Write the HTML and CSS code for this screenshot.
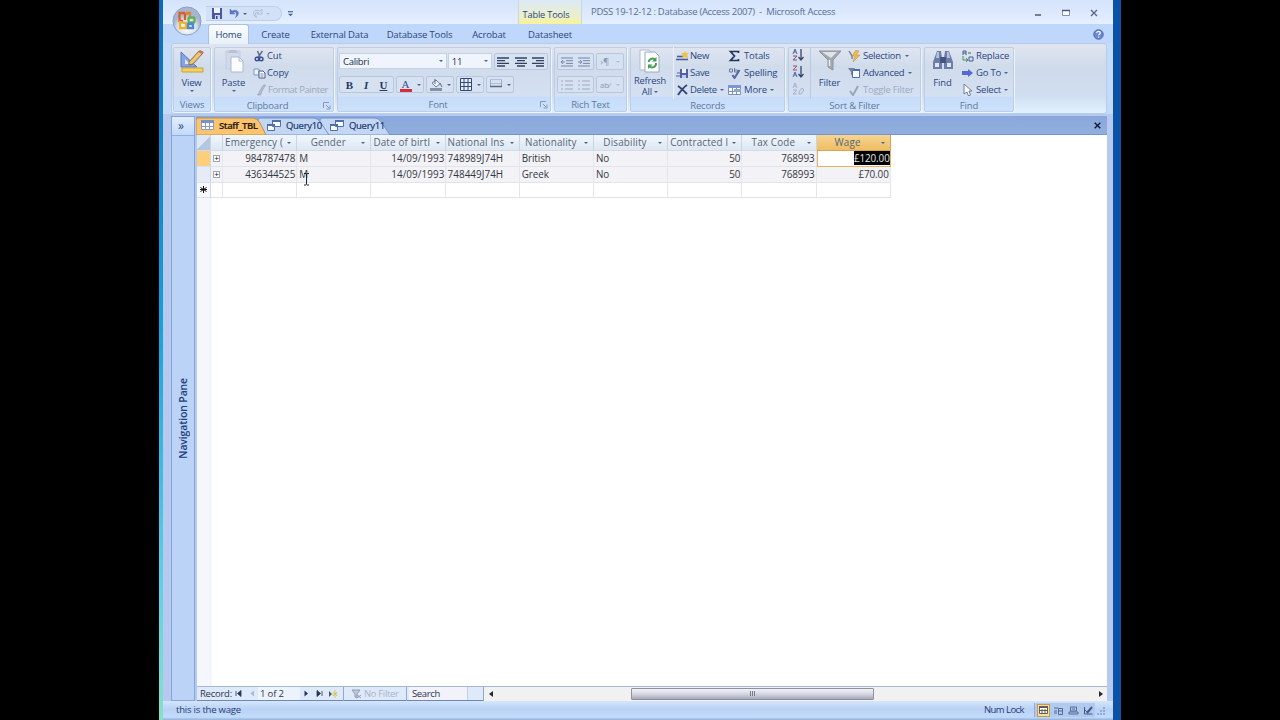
FILE: index.html
```html
<!DOCTYPE html>
<html lang="en">
<head>
    <meta charset="UTF-8">
    <title>PDSS 19-12-12 : Database (Access 2007) - Microsoft Access</title>
    <link rel="stylesheet" href="styles.css">
</head>
<body>
    <div class="desktop">
        <div class="window">
            <div class="office-button">
                <svg width="30" height="30" viewBox="0 0 30 30">
                    <defs><radialGradient id="orb" cx="50%" cy="75%"><stop offset="0" stop-color="#fffdf5"/><stop offset=".65" stop-color="#dde2ee"/><stop offset="1" stop-color="#a7b5d0"/></radialGradient></defs>
                    <circle cx="15" cy="15" r="14" fill="url(#orb)" stroke="#8d9fc4"/>
                    <g fill="none" stroke-width="2.3">
                        <path d="M13 7H7.500v8H11M13 7v7" stroke="#dc5d2c"/>
                        <path d="M15 9v-2h3v4" stroke="#d9892d"/>
                        <rect x="16.5" y="11.500" width="6" height="5" rx="1" stroke="#5fae58"/>
                        <path d="M8 16v6h6v-5z" stroke="#e9b52e"/>
                        <path d="M16 18h5v4h-5z" stroke="#4f88cf"/>
                    </g>
                </svg>
            </div>
            <div class="title-bar">
                <div class="quick-access">
                    <svg width="12" height="11" viewBox="0 0 12 11"><path fill="#4b57a6" d="M1 0h10v11H1z"/><path fill="#eef3ff" d="M3 0h6v5H3z"/><path fill="#cfd8f2" d="M4 7h5v4H4z"/><path fill="#39458e" d="M5 8h1.500v3H5z"/></svg>
                    <svg width="11" height="11" viewBox="0 0 11 11"><path d="M1 1v5h5L4.300 4.500C7 3 8.500 5 6.500 9.500 12 6 9 0 3 3z" fill="#5877c4" stroke="#5877c4" stroke-width=".5"/></svg>
                    <i class="caret"></i>
                    <svg class="redo" width="11" height="11" viewBox="0 0 11 11"><path d="M10 1v5H5l1.700-1.500C4 3 2.500 5 4.500 9.500-1 6 2 0 8 3z" fill="#d5dff1" stroke="#9fafd0" stroke-width=".7"/></svg>
                    <i class="caret pale"></i>
                </div>
                <svg class="customize" width="7" height="6" viewBox="0 0 7 6"><path d="M1 .700h5" stroke="#4d628f" stroke-width="1.200"/><path d="M1 2.700h5L3.500 5.300z" fill="#4d628f"/></svg>
                <div class="context-title">Table Tools</div>
                <div class="window-title">PDSS 19-12-12 : Database (Access 2007) &nbsp;-&nbsp; Microsoft Access</div>
                <div class="window-buttons">
                    <svg width="8" height="8" viewBox="0 0 8 8"><path d="M1 6h6" stroke="#49587e" stroke-width="1.500"/></svg>
                    <svg width="8" height="8" viewBox="0 0 8 8"><path d="M.5 1.500h7v5h-7z" fill="#fff" stroke="#8190b0"/><path d="M0 1.500h8" stroke="#49587e" stroke-width="1.500"/></svg>
                    <svg width="8" height="8" viewBox="0 0 8 8"><path d="M1 1l6 6M7 1L1 7" stroke="#59688c" stroke-width="1.400"/></svg>
                </div>
            </div>
            <div class="ribbon-tabs">
                <span class="tab active t-home">Home</span>
                <span class="tab t-create">Create</span>
                <span class="tab t-external">External Data</span>
                <span class="tab t-database">Database Tools</span>
                <span class="tab t-acrobat">Acrobat</span>
                <span class="tab t-datasheet">Datasheet</span>
                <svg class="help" width="11" height="11" viewBox="0 0 11 11"><circle cx="5.500" cy="5.500" r="4.700" fill="#6b89d4" stroke="#4164b8"/><path d="M3.800 4c0-2.300 3.500-2 3.500 0 0 1.200-1.700 1.200-1.700 2.300M5.600 7.600v1.200" fill="none" stroke="#fff" stroke-width="1.200"/></svg>
            </div>

            <div class="ribbon">
                <div class="group g-views">
                    <div class="group-body">
                        <div class="big-button">
                            <svg width="26" height="26" viewBox="0 0 26 26"><path d="M2 4v15h16z" fill="#86a4e2" stroke="#5678c4"/><path d="M6 11v5h5z" fill="#dce8fc"/><path d="M10 14L20 3l4 2-10 11-4 1z" fill="#efc66d" stroke="#846d50"/><path d="M19 4l2-2 4 2-2 2z" fill="#bd7560"/><path d="M3 20h21v4H3z" fill="#f4d25d" stroke="#c7a23b"/></svg>
                            <span>View</span><i class="caret"></i>
                        </div>
                    </div>
                    <div class="group-name">Views</div>
                </div>
                <div class="group g-clipboard">
                    <div class="group-body">
                        <div class="big-button">
                            <svg width="24" height="26" viewBox="0 0 24 26"><path d="M4 3h14v18H4z" fill="#d0daea" stroke="#c1cce0"/><path d="M8 2h6l2 3H6z" fill="#b6c1d4"/><path d="M9 9h8l4 4v11H9z" fill="#fbfdff" stroke="#aab9d4"/><path d="M17 9v4h4" fill="none" stroke="#aab9d4"/></svg>
                            <span>Paste</span><i class="caret"></i>
                        </div>
                        <div class="stack">
                            <div class="row"><svg width="12" height="12" viewBox="0 0 12 12"><path d="M4 1l3 7M9 1L4 8" stroke="#596990" stroke-width="1.400"/><circle cx="3.500" cy="9" r="1.800" fill="none" stroke="#364c92" stroke-width="1.400"/><circle cx="7.700" cy="9" r="1.800" fill="none" stroke="#364c92" stroke-width="1.400"/></svg>Cut</div>
                            <div class="row"><svg width="13" height="12" viewBox="0 0 13 12"><path d="M1 2h5v6H1z" fill="#eaf1ff" stroke="#8496b9"/><path d="M6 4h4l2 2v5H6z" fill="#fff" stroke="#46588c"/><path d="M7.500 7h3M7.500 9h3" stroke="#6b82b9"/></svg>Copy</div>
                            <div class="row off painter"><svg width="12" height="12" viewBox="0 0 12 12"><path d="M10 1L7 6l-2 5H2l3-5 3-5z" fill="#b8c1d2" stroke="#929db4" stroke-width=".7"/></svg>Format Painter</div>
                        </div>
                    </div>
                    <div class="group-name">Clipboard<svg class="launcher" width="8" height="8" viewBox="0 0 8 8"><path d="M.5 6V.500H6M3 3l3 3M7 3.500V7H3.500" fill="none" stroke="#8398bd"/></svg></div>
                </div>
                <div class="group g-font">
                    <div class="group-body font-body">
                        <div class="line">
                            <div class="combo face">Calibri<i class="caret"></i></div>
                            <div class="combo size">11<i class="caret"></i></div>
                            <div class="button-set align">
                                <svg width="12" height="10" viewBox="0 0 12 10"><path d="M0 1h12M0 3.700h8M0 6.400h12M0 9h8" stroke="#33415f" stroke-width="1.300"/></svg>
                                <svg width="12" height="10" viewBox="0 0 12 10"><path d="M0 1h12M2 3.700h8M0 6.400h12M2 9h8" stroke="#33415f" stroke-width="1.300"/></svg>
                                <svg width="12" height="10" viewBox="0 0 12 10"><path d="M0 1h12M4 3.700h8M0 6.400h12M4 9h8" stroke="#33415f" stroke-width="1.300"/></svg>
                            </div>
                        </div>
                        <div class="line">
                            <div class="button-set biu"><b>B</b><em>I</em><u>U</u></div>
                            <div class="button-set pick"><span class="font-color">A</span><i class="caret"></i></div>
                            <div class="button-set pick"><svg width="14" height="13" viewBox="0 0 14 13"><path d="M3 5l4-3 4 4-4 3z" fill="#edf2fa" stroke="#707e99"/><path d="M6 1v5M11 5l2 4" stroke="#5a6b8f"/><path d="M1 10h12v3H1z" fill="#8292ac"/></svg><i class="caret"></i></div>
                            <div class="button-set pick"><svg width="14" height="13" viewBox="0 0 14 13"><path d="M1.500.500h11v12h-11zM5 .500v12M9 .500v12M1.500 4.500h11M1.500 8.500h11" fill="#e8effb" stroke="#344978"/></svg><i class="caret"></i></div>
                            <div class="button-set pick last"><svg width="14" height="13" viewBox="0 0 14 13"><path d="M1.500 2v7M12.500 2v7" stroke="#9aabcb"/><path d="M1 1.500h12M2 5.500h10" stroke="#b1bfd8"/><path d="M1 8.500h12" stroke="#596a8d" stroke-width="1.500"/></svg><i class="caret"></i></div>
                        </div>
                    </div>
                    <div class="group-name">Font<svg class="launcher" width="8" height="8" viewBox="0 0 8 8"><path d="M.5 6V.500H6M3 3l3 3M7 3.500V7H3.500" fill="none" stroke="#8398bd"/></svg></div>
                </div>
                <div class="group g-rich">
                    <div class="group-body font-body">
                        <div class="line">
                            <div class="button-set rich-pair">
                                <svg width="12" height="10" viewBox="0 0 12 10"><path d="M0 1h12M5 3.700h7M5 6.400h7M0 9h12M4 5H0M2 3L0 5l2 2" fill="none" stroke="#7586a8"/></svg>
                                <svg width="12" height="10" viewBox="0 0 12 10"><path d="M0 1h12M5 3.700h7M5 6.400h7M0 9h12M0 5h4M2 3l2 2-2 2" fill="none" stroke="#7586a8"/></svg>
                            </div>
                            <div class="button-set rich-one">›¶<i class="caret pale"></i></div>
                        </div>
                        <div class="line">
                            <div class="button-set rich-pair">
                                <svg width="12" height="10" viewBox="0 0 12 10"><path d="M1 0v2M1 4v2M1 8v2M4 1h8M4 5h8M4 9h8" stroke="#9caac2"/></svg>
                                <svg width="12" height="10" viewBox="0 0 12 10"><path d="M0 1h2M0 5h2M0 9h2M4 1h8M4 5h8M4 9h8" stroke="#9caac2"/></svg>
                            </div>
                            <div class="button-set rich-one"><span class="ab">ab⁄</span><i class="caret pale"></i></div>
                        </div>
                    </div>
                    <div class="group-name">Rich Text</div>
                </div>
                <div class="group g-records">
                    <div class="group-body">
                        <div class="big-button refresh">
                            <svg width="24" height="26" viewBox="0 0 24 26"><path d="M2 2h9l3 3v17H2z" fill="#fafcff" stroke="#b2bdce"/><path d="M7 4h10l4 4v16H7z" fill="#fff" stroke="#9ba9c2"/><path d="M10.500 14a4 4 0 0 1 7-2M18 15a4 4 0 0 1-7 3" fill="none" stroke="#469b55" stroke-width="1.900"/><path d="M18.500 9v4.500h-4.500zM10 21v-4.500h4.500z" fill="#469b55"/></svg>
                            <div class="two-lines">Refresh<br>All <i class="caret"></i></div>
                        </div>
                        <div class="stack r-one">
                            <div class="row"><svg width="13" height="12" viewBox="0 0 13 12"><path d="M1 5h11v5H1z" fill="#c9d9f4"/><path d="M0 9.500h12M1 6.500h6" stroke="#495d91" stroke-width="1.300"/><path d="M9 1l1 2 3 0-2 2 1 3-3-1-3 1 1-3-2-2h3z" fill="#f0c33b"/></svg>New</div>
                            <div class="row"><svg width="13" height="12" viewBox="0 0 13 12"><path d="M0 9h8M1 6h5" stroke="#526498"/><path d="M4 2h8v9H4z" fill="#515eab"/><path d="M6 2h4v4H6z" fill="#f0f3ff"/><path d="M6 8h4v3H6z" fill="#c3cced"/></svg>Save</div>
                            <div class="row"><svg width="13" height="12" viewBox="0 0 13 12"><path d="M2 2c3 2 6 5 9 8M11 1C8 3 4 8 2 11" fill="none" stroke="#354777" stroke-width="1.900"/></svg>Delete<i class="caret"></i></div>
                        </div>
                        <div class="stack r-two">
                            <div class="row"><svg width="12" height="12" viewBox="0 0 12 12"><path d="M10 3V1.500H2L6 6l-4 4.500h8V9" fill="none" stroke="#22345e" stroke-width="1.700"/></svg>Totals</div>
                            <div class="row"><svg width="12" height="12" viewBox="0 0 12 12"><path d="M1 2h3v3H1zM6 1v4h3V3H6" fill="none" stroke="#6a7ba0"/><path d="M4 8l2 3 5-8" fill="none" stroke="#526a9b" stroke-width="2"/></svg>Spelling</div>
                            <div class="row"><svg width="13" height="12" viewBox="0 0 13 12"><path d="M.500 1.500h12v9H.500zM.500 7.500h12M4.500 4v7M8.500 4v7" fill="#fff" stroke="#7890bb"/><path d="M0 1h13v3H0z" fill="#7b98cd"/><path d="M6 5h7v3H6z" fill="#90a5cd"/></svg>More<i class="caret"></i></div>
                        </div>
                    </div>
                    <div class="group-name">Records</div>
                </div>
                <div class="group g-sort">
                    <div class="group-body">
                        <div class="sort-icons">
                            <svg width="14" height="14" viewBox="0 0 14 14"><path d="M2 6l2-5 2 5M3 4h2" fill="none" stroke="#4f67a5"/><path d="M2 8h4l-4 4h4" fill="none" stroke="#7c5163"/><path d="M10 1v10M7.500 9l2.500 3 2.500-3" fill="none" stroke="#34466f" stroke-width="1.300"/></svg>
                            <svg width="14" height="14" viewBox="0 0 14 14"><path d="M2 1h4L2 5h4" fill="none" stroke="#a25171"/><path d="M2 12l2-5 2 5M3 10h2" fill="none" stroke="#4f67a5"/><path d="M10 1v10M7.500 9l2.500 3 2.500-3" fill="none" stroke="#34466f" stroke-width="1.300"/></svg>
                            <svg width="14" height="14" viewBox="0 0 14 14"><path d="M2 6l2-5 2 5M3 4h2M2 8h4l-4 4h4M8 10l3-4 2 2-3 4H8z" fill="none" stroke="#a3b0c7"/></svg>
                        </div>
                        <div class="big-button filter">
                            <svg width="26" height="26" viewBox="0 0 26 26"><path d="M2 3h22l-8 9v10l-5-3v-7z" fill="#a3a7b0" stroke="#8d939f"/><path d="M5 4h15l-6 6z" fill="#e0e3e8"/><path d="M12.500 12v6" stroke="#eceff3" stroke-width="1.500"/></svg>
                            <span>Filter</span>
                        </div>
                        <div class="stack s-one">
                            <div class="row"><svg width="13" height="12" viewBox="0 0 13 12"><path d="M1 1l3 5v3" fill="none" stroke="#6d7ca0" stroke-width="1.400"/><path d="M8 0L4 6h3l-2 6 7-7H8l3-4z" fill="#efbd44" stroke="#b68c3c" stroke-width=".5"/></svg>Selection<i class="caret"></i></div>
                            <div class="row"><svg width="13" height="12" viewBox="0 0 13 12"><path d="M4.500 3.500h7v7h-7z" fill="#fff" stroke="#476db0"/><path d="M4 3h8" stroke="#476db0" stroke-width="2"/><path d="M0 1h7L4 5v4L3 7V5z" fill="#75819a"/></svg>Advanced<i class="caret"></i></div>
                            <div class="row off"><svg width="13" height="12" viewBox="0 0 13 12"><path d="M2 7l3 4 5-9" fill="none" stroke="#98a6bd" stroke-width="2"/></svg>Toggle Filter</div>
                        </div>
                    </div>
                    <div class="group-name">Sort &amp; Filter</div>
                </div>
                <div class="group g-find">
                    <div class="group-body">
                        <div class="big-button">
                            <svg width="24" height="26" viewBox="0 0 24 26"><path d="M6 3h4l1 7v11H2v-7zM14 3h4l4 11v7h-9V10z" fill="#6b7da8"/><path d="M9 9h6v6H9z" fill="#42547f"/><path d="M4 15h4v4H4zM16 15h4v4h-4z" fill="#dfe6f3"/><path d="M6 4h2v6H5zM16 4h2l1 6h-3z" fill="#b4c1dc"/></svg>
                            <span>Find</span>
                        </div>
                        <div class="stack f-one">
                            <div class="row"><svg width="13" height="12" viewBox="0 0 13 12"><path d="M2 5V1h3v4M2 3h3M7 3h3" fill="none" stroke="#465b88"/><path d="M2 6v4h4M5 8l2 2-2 2" fill="none" stroke="#4b8c5d"/><path d="M8 7h4v4H8z" fill="none" stroke="#465b88"/></svg>Replace</div>
                            <div class="row"><svg width="13" height="12" viewBox="0 0 13 12"><path d="M1 4h6V2l5 4-5 4V8H1z" fill="#5467d4"/></svg>Go To<i class="caret"></i></div>
                            <div class="row"><svg width="13" height="12" viewBox="0 0 13 12"><path d="M3 0v10l3-2 1.500 4 2-1L8 7h3z" fill="#fff" stroke="#61718f" stroke-width=".9"/></svg>Select<i class="caret"></i></div>
                        </div>
                    </div>
                    <div class="group-name">Find</div>
                </div>
            </div>

            <div class="workspace">
                <div class="nav-pane">
                    <div class="nav-toggle">»</div>
                    <div class="nav-body"><span class="nav-label">Navigation Pane</span></div>
                </div>
                <div class="document">
                    <div class="doc-tabs">
                        <svg class="tab-shapes" width="200" height="18" viewBox="0 0 200 18">
                            <path d="M124 18V3q0-2 2-2h53q4 0 7 5l8 12z" fill="#c3d7f5" stroke="#7591c6"/>
                            <path d="M62 18V3q0-2 2-2h54q4 0 7 5l8 12z" fill="#c3d7f5" stroke="#7591c6"/>
                            <path d="M0 18V3q0-2 2-2h55q4 0 7 5l6 12z" fill="#fdc46f" stroke="#b98f52"/>
                        </svg>
                        <div class="doc-tab current"><svg width="14" height="11" viewBox="0 0 14 11"><path d="M.500.500h12v9H.500zM.500 6.500h12M4.500 3v7M8.500 3v7" fill="#fff" stroke="#889bc0"/><path d="M0 0h13v3H0z" fill="#7892ca"/></svg><span>Staff_TBL</span></div>
                        <div class="doc-tab q10"><svg width="14" height="11" viewBox="0 0 14 11"><path d="M5.500.500h8v6h-8zM.500 4.500h7v6h-7z" fill="#f8fbff" stroke="#526fa6"/><path d="M5 1h9M0 5h8" stroke="#526fa6" stroke-width="2"/></svg><span>Query10</span></div>
                        <div class="doc-tab q11"><svg width="14" height="11" viewBox="0 0 14 11"><path d="M5.500.500h8v6h-8zM.500 4.500h7v6h-7z" fill="#f8fbff" stroke="#526fa6"/><path d="M5 1h9M0 5h8" stroke="#526fa6" stroke-width="2"/></svg><span>Query11</span></div>
                        <svg class="doc-close" width="7" height="7" viewBox="0 0 7 7"><path d="M.700.700l5.600 5.600M6.300.700L.700 6.300" stroke="#0c1938" stroke-width="1.400"/></svg>
                    </div>
                    <div class="sheet">
                        <div class="grid">
                            <div class="head corner"></div><div class="head"></div>
                            <div class="head"><span class="long">Emergency (</span><i class="caret"></i></div>
                            <div class="head"><span>Gender</span><i class="caret"></i></div>
                            <div class="head"><span class="long">Date of birtl</span><i class="caret"></i></div>
                            <div class="head"><span class="long">National Ins</span><i class="caret"></i></div>
                            <div class="head"><span>Nationality</span><i class="caret"></i></div>
                            <div class="head"><span>Disability</span><i class="caret"></i></div>
                            <div class="head"><span class="long">Contracted l</span><i class="caret"></i></div>
                            <div class="head"><span>Tax Code</span><i class="caret"></i></div>
                            <div class="head picked"><span>Wage</span><i class="caret"></i></div>

                            <div class="selector picked"></div><div class="cell expand"><i>+</i></div>
                            <div class="cell num">984787478</div><div class="cell">M</div><div class="cell num date">14/09/1993</div><div class="cell code">748989J74H</div><div class="cell">British</div><div class="cell">No</div><div class="cell num">50</div><div class="cell num">768993</div><div class="cell num editing"><mark>£120.00</mark></div>

                            <div class="selector"></div><div class="cell expand"><i>+</i></div>
                            <div class="cell num">436344525</div><div class="cell">M</div><div class="cell num date">14/09/1993</div><div class="cell code">748449J74H</div><div class="cell">Greek</div><div class="cell">No</div><div class="cell num">50</div><div class="cell num">768993</div><div class="cell num">£70.00</div>

                            <div class="selector new-row"><svg width="9" height="9" viewBox="0 0 9 9"><path d="M4.500 1v7M1.500 2.500l6 4M7.500 2.500l-6 4M1 4.500h7" stroke="#111"/></svg></div>
                            <div class="cell blank"></div><div class="cell blank"></div><div class="cell blank"></div><div class="cell blank"></div><div class="cell blank"></div><div class="cell blank"></div><div class="cell blank"></div><div class="cell blank"></div><div class="cell blank"></div><div class="cell blank"></div>
                        </div>
                        <svg class="text-cursor" width="7" height="13" viewBox="0 0 7 13"><path d="M1 .500h2l.500.500.500-.500h2M3.500 1v10M1 12h2l.500-.500.500.500h2" fill="none" stroke="#222"/></svg>
                    </div>
                    <div class="record-bar">
                        <span class="record-label">Record:</span>
                        <svg class="first" width="7" height="7" viewBox="0 0 7 7"><path d="M1 1v5M6 .500v6L2.500 3.500z" fill="#263858" stroke="#263858" stroke-width=".8"/></svg>
                        <svg class="prev" width="6" height="7" viewBox="0 0 6 7"><path d="M4 .500v6l-3.500-3z" fill="#a9b8ce"/></svg>
                        <span class="record-pos">1 of 2</span>
                        <svg class="next" width="6" height="7" viewBox="0 0 6 7"><path d="M1.500.500v6l3.500-3z" fill="#263858"/></svg>
                        <svg class="last-rec" width="7" height="7" viewBox="0 0 7 7"><path d="M6 1v5M1 .500v6l3.500-3z" fill="#263858" stroke="#263858" stroke-width=".8"/></svg>
                        <svg class="new-rec" width="10" height="8" viewBox="0 0 10 8"><path d="M1 1v6l3-3z" fill="#46587b"/><path d="M7 0v8M4.500 4h5M5 2l4 4M9 2L5 6" stroke="#dcc75c"/></svg>
                        <div class="no-filter"><svg width="11" height="10" viewBox="0 0 11 10"><path d="M1 1h8L6 5v4L4 8V5z" fill="#c1cad8" stroke="#8f9db4"/><path d="M6 6l4 3M10 6L6 9" stroke="#8f9db4"/></svg><span>No Filter</span></div>
                        <span class="search">Search</span>
                        <div class="scroll">
                            <i class="arrow left"></i>
                            <div class="track"><div class="thumb"><i></i><i></i><i></i></div></div>
                            <i class="arrow right"></i>
                        </div>
                    </div>
                </div>
            </div>
            <div class="status-bar">
                <span>this is the wage</span>
                <span class="num-lock">Num Lock</span>
                <div class="view-buttons">
                    <svg class="on" width="13" height="13" viewBox="0 0 13 13"><path d="M2.500 3.500h8v6h-8zM5 5v5M8 5v5M3 6.500h7" fill="#fff" stroke="#635b55"/><path d="M2 3h9" stroke="#635b55" stroke-width="2"/></svg>
                    <svg width="13" height="13" viewBox="0 0 13 13"><path d="M2 4h4M2 7h3M2 9h3M6.500 4.500h4v6h-4zM7 7h3" fill="none" stroke="#526a96"/></svg>
                    <svg width="13" height="13" viewBox="0 0 13 13"><path d="M3.500 3h6v4h-6zM2 8h9v2H2zM5 5h3" fill="none" stroke="#526a96"/></svg>
                    <svg width="13" height="13" viewBox="0 0 13 13"><path d="M2.500 3v7h8M3 6l2 2" fill="none" stroke="#415888"/><path d="M5 9l5-6" stroke="#415888" stroke-width="2"/></svg>
                </div>
                <svg class="grip" width="10" height="10" viewBox="0 0 10 10"><path d="M7 2h2M4 5h2M7 5h2M1 8h2M4 8h2M7 8h2" stroke="#809cc8" stroke-width="1.500"/></svg>
            </div>
        </div>
    </div>
</body>
</html>
```

FILE: styles.css
```css
* {
    box-sizing: border-box;
}
body {
    margin: 0;
    height: 720px;
    overflow: hidden;
    background: #000;
    font-family: "Open Sans", "Noto Sans", sans-serif;
    font-size: 9.5px;
    letter-spacing: -0.15px;
    color: #2b4680;
    white-space: nowrap;
}
svg {
    display: block;
    flex: none;
}
.desktop {
    width: 962px;
    height: 720px;
    margin-left: 159px;
    padding: 0 8px 0 4px;
    background: linear-gradient(90deg, transparent 50%, #0a51a8 50%), linear-gradient(#0b69b6, #16a0dc 45%, #5ed3e5 82%, #86e0ca);
}
.window {
    position: relative;
    height: 720px;
    display: flex;
    flex-direction: column;
    background: #c3daf8;
}
.caret {
    display: inline-block;
    flex: none;
    width: 0;
    height: 0;
    border: 2px solid transparent;
    border-top-color: #4d628f;
    border-bottom: 0;
}
.caret.pale {
    border-top-color: #aebcd5;
}
.office-button {
    position: absolute;
    left: 9px;
    top: 6px;
    z-index: 2;
}

/* title bar */
.title-bar {
    display: flex;
    height: 24px;
    background: linear-gradient(#d5e4fb, #dce9fd 50%, #e5efff);
}
.quick-access {
    display: flex;
    align-items: center;
    gap: 5px;
    width: 76px;
    height: 15px;
    margin: 6px 0 0 43px;
    padding-left: 5px;
    border: 1px solid #c0cfe8;
    border-left: 0;
    border-radius: 0 8px 8px 0;
    background: #d3e1f7;
}
.quick-access svg {
    margin-right: 1px;
}
.quick-access .caret {
    margin-left: -3px;
}
.customize {
    margin: 11px 0 0 5px;
}
.context-title {
    width: 64px;
    height: 24px;
    margin-left: 224px;
    padding: 9px 8px 0 0;
    border: 1px solid #cbd7df;
    border-width: 0 1px;
    background: linear-gradient(#dce9f8, #edf0c3 75%, #faf391);
    text-align: center;
    line-height: 12px;
    font-size: 9.2px;
}
.window-title {
    margin-left: 9px;
    line-height: 23px;
    letter-spacing: -0.3px;
    color: #5a6c98;
}
.window-buttons {
    display: flex;
    gap: 20px;
    margin: 9px 15px 0 auto;
}

/* ribbon */
.ribbon-tabs {
    position: relative;
    display: flex;
    height: 19px;
    padding-left: 45px;
    background: #bfd7fb;
    line-height: 21px;
}
.tab {
    text-align: center;
}
.tab.active {
    height: 20px;
    border: 1px solid #a9c1e6;
    border-bottom: 0;
    border-radius: 3px 3px 0 0;
    background: linear-gradient(#fcfeff, #e8eff9);
    z-index: 1;
    line-height: 19px;
}
.t-home { width: 41px; }
.t-create { width: 53px; }
.t-external { width: 75px; }
.t-database { width: 85px; }
.t-acrobat { width: 54px; }
.t-datasheet { width: 68px; }
.help {
    margin: 5px 9px 0 auto;
}
.ribbon {
    display: flex;
    gap: 3px;
    height: 71px;
    margin: 0 6px 0 8px;
    padding: 3px 2px 2px 1px;
    border: 1px solid #b5cceb;
    border-radius: 3px;
    background: linear-gradient(#dfe5f0, #cfdaea 35%, #cfdef1 75%, #e3f2ff);
}
.group {
    flex: none;
    display: flex;
    flex-direction: column;
    height: 65px;
    border: 1px solid #bccde5;
    border-radius: 2px;
    background: linear-gradient(#dfe5f0, #d0dbeb 30%, #d4e1f3 76%, #c6dcf9 78%, #cde2fa);
    box-shadow: 1px 1px 0 #edf5ff;
}
.g-views { width: 38px; }
.g-clipboard { width: 120px; }
.g-font { width: 214px; }
.g-rich { width: 73px; }
.g-records { width: 155px; }
.g-sort { width: 133px; }
.g-find { width: 90px; }
.group-body {
    display: flex;
    height: 51px;
}
.group-name {
    display: flex;
    justify-content: center;
    position: relative;
    line-height: 13px;
    color: #61779f;
}
.g-clipboard .group-name {
    padding-right: 13px;
}
.g-font .group-name {
    padding-right: 12px;
}
.launcher {
    position: absolute;
    right: 2px;
    top: 3px;
}
.big-button {
    display: flex;
    flex-direction: column;
    align-items: center;
    width: 35px;
    line-height: 13px;
}
.big-button span {
    margin-top: 2px;
}
.big-button .caret {
    margin-top: 1px;
}
.stack {
    margin-top: -1px;
    margin-left: 3px;
}
.row {
    display: flex;
    align-items: center;
    gap: 3px;
    height: 17.2px;
}
.row svg {
    width: 13px;
}
.row .caret {
    margin-left: 1px;
}
.off {
    color: #9aa8c0;
}
.g-clipboard .big-button {
    margin-left: 1px;
}
.g-clipboard .stack {
    margin-left: 0;
    padding-left: 2px;
}
.g-clipboard .row {
    gap: 1px;
}
.g-clipboard .painter {
    padding-left: 2px;
    gap: 0;
    letter-spacing: -0.45px;
}
.font-body {
    flex-direction: column;
    gap: 5px;
    padding: 5px 2px 0;
}
.g-font .font-body {
    padding-left: 1px;
}
.line {
    display: flex;
    height: 18px;
    gap: 2px;
}
.combo {
    display: flex;
    justify-content: space-between;
    align-items: center;
    height: 16px;
    padding: 0 3px;
    border: 1px solid #c3d2e9;
    background: #f0f4fc;
    color: #20304f;
    letter-spacing: -0.3px;
}
.face { width: 111px; }
.size { width: 45px; margin-left: -1px; }
.button-set {
    display: flex;
    align-items: center;
    justify-content: space-around;
    height: 17px;
    border: 1px solid #b7c7e0;
    border-radius: 2px;
    background: #d6e1f2;
}
.align { width: 56px; margin-left: 0; }
.biu {
    width: 55px;
    font-family: "Liberation Serif", serif;
    font-size: 11px;
    font-weight: bold;
    color: #26385e;
}
.pick { width: 28px; }
.last { width: 28px; }
.font-color {
    width: 12px;
    height: 14px;
    border-bottom: 3px solid #d9293d;
    font: 11px/12px "Liberation Serif", serif;
    text-align: center;
    color: #344f8a;
}
.rich-pair { width: 38px; }
.rich-one {
    width: 29px;
    color: #8b9bb7;
}
.ab {
    font-size: 8px;
}
.refresh {
    width: 38px;
    margin-right: 1px;
}
.two-lines {
    margin-top: 2px;
    line-height: 10.5px;
    text-align: center;
    font-size: 9.3px;
}
.two-lines .caret {
    vertical-align: 2px;
}
.r-one {
    width: 53px;
    padding-left: 2px;
    border-left: 1px solid #e9f1fc;
}
.r-one .row {
    gap: 1px;
    letter-spacing: -0.3px;
}
.r-one .caret {
    margin-left: 2px;
}
.r-two {
    margin-left: 2px;
}
.r-two .caret {
    margin-left: 0;
}
.sort-icons {
    display: flex;
    flex-direction: column;
    gap: 3px;
    width: 22px;
    padding: 0 0 0 2px;
    border-right: 1px solid #b9cae2;
}
.filter {
    width: 37px;
}
.s-one {
    margin-left: 0;
}
.s-one .row {
    gap: 2px;
    letter-spacing: -0.25px;
}
.s-one .caret {
    margin-left: 2px;
}
.f-one {
    margin-left: 1px;
}
.f-one .row {
    gap: 2px;
    letter-spacing: -0.2px;
}

/* navigation pane and document */
.workspace {
    display: flex;
    flex: 1;
    min-height: 0;
    padding: 2px 6px 0 8px;
    background: #b7c9ee;
}
.nav-pane {
    display: flex;
    flex-direction: column;
    width: 24px;
    margin-right: 2px;
    border: 1px solid #84a5d8;
    background: #bbd3f7;
}
.nav-toggle {
    height: 19px;
    border-bottom: 1px solid #91afe0;
    background: linear-gradient(#e2edfd, #c3d9fa);
    text-align: center;
    text-indent: -4px;
    font-size: 12px;
    line-height: 17px;
}
.nav-body {
    display: flex;
    flex: 1;
    align-items: center;
    justify-content: center;
}
.nav-label {
    writing-mode: vertical-rl;
    transform: rotate(180deg);
    font-size: 10.5px;
    font-weight: 600;
    color: #243d7d;
}
.document {
    display: flex;
    flex-direction: column;
    flex: 1;
    min-width: 0;
    background: #fff;
}
.doc-tabs {
    position: relative;
    display: flex;
    align-items: center;
    height: 19px;
    margin-left: -1px;
    border-bottom: 1px solid #7295cf;
    background: linear-gradient(#8aa8dc, #91aede);
    color: #1d376c;
}
.tab-shapes {
    position: absolute;
    left: 0;
    top: 1px;
}
.doc-tab {
    position: relative;
    display: flex;
    align-items: center;
    gap: 5px;
    width: 66px;
    padding-left: 5px;
    letter-spacing: -0.3px;
    -webkit-text-stroke: 0.2px;
}
.current {
    color: #2b1c10;
    font-weight: 600;
    letter-spacing: -0.4px;
}
.current span {
    margin-left: -1px;
}
.q10 {
    width: 63px;
}
.doc-close {
    margin: 0 6px 0 auto;
}
.sheet {
    position: relative;
    flex: 1;
    background: linear-gradient(90deg, #f5f7fc 13px, #ebeef6 13px, #fff 15px);
}
.grid {
    display: grid;
    grid-template-columns: 14px 12px repeat(9, 74.2px);
    grid-template-rows: 16px 16px 15.500px 15px;
    width: 694px;
    font-size: 9.9px;
    letter-spacing: -0.1px;
    color: #343840;
}
.head {
    display: flex;
    align-items: center;
    justify-content: space-between;
    padding: 0 5px 0 2px;
    border-right: 1px solid #cbd5e1;
    border-bottom: 1px solid #d3dce7;
    background: linear-gradient(#f0f6fd, #dde8f3);
    color: #596477;
    letter-spacing: 0.15px;
    line-height: 13px;
}
.head span {
    flex: 1;
    text-align: center;
    padding-right: 4px;
}
.head .long {
    flex: none;
    padding: 0;
    text-align: left;
}
.head.corner {
    background: linear-gradient(135deg, #dce8f5 50%, #b4c7df 50%);
}
.head.picked {
    background: linear-gradient(#f7d58f, #efbd66);
    border-color: #d8a652;
}
.selector {
    border-right: 1px solid #ccd7e7;
    border-bottom: 1px solid #d8e0ee;
    background: #e6ebf5;
}
.selector.picked {
    background: #fccf7c;
}
.new-row {
    display: flex;
    align-items: center;
    justify-content: center;
    background: #f7f9fd;
}
.cell {
    padding: 0 2px;
    border-right: 1px solid #e4e6ec;
    border-bottom: 1px solid #e2e4ea;
    background: #f2f2f7;
    line-height: 15.5px;
}
.num {
    text-align: right;
    padding-right: 1px;
}
.date {
    padding-right: 0;
    letter-spacing: 0.1px;
}
.code {
    letter-spacing: 0.05px;
}
.blank {
    background: #fff;
}
.expand {
    display: flex;
    align-items: center;
    justify-content: center;
}
.expand i {
    width: 7px;
    height: 7px;
    border: 1px solid #9aa4b5;
    background: #fff;
    font: 8px/5px "Liberation Sans", sans-serif;
    text-align: center;
    color: #111;
}
.editing {
    padding-right: 0;
    background: #fff;
    border: 1px solid #e8b45e;
    border-top: 0;
    line-height: 15px;
}
mark {
    display: inline-block;
    height: 14px;
    background: #000;
    color: #e8e8e8;
}
.text-cursor {
    position: absolute;
    left: 106px;
    top: 38px;
}

/* record navigation */
.record-bar {
    display: flex;
    align-items: center;
    height: 15px;
    border-top: 1px solid #a5b7d2;
    border-bottom: 1px solid #6c88b6;
    background: #deeafa;
    color: #2b3650;
}
.record-label {
    width: 38px;
    padding-left: 3px;
    letter-spacing: -0.25px;
}
.prev { margin-left: 8px; }
.record-pos {
    width: 42px;
    height: 13px;
    margin-left: 2px;
    padding-left: 2px;
    background: #edf3fb;
    line-height: 13px;
}
.next { margin-left: 3px; }
.last-rec { margin-left: 7px; }
.new-rec { margin-left: 5px; }
.no-filter {
    display: flex;
    align-items: center;
    gap: 2px;
    width: 64px;
    height: 14px;
    margin-left: 5px;
    padding-left: 7px;
    border: 1px solid #92a9cd;
    border-width: 0 1px;
    color: #a9b5c7;
    letter-spacing: -0.35px;
}
.search {
    width: 59px;
    height: 13px;
    margin-left: 2px;
    padding-left: 3px;
    border-right: 1px solid #c2cfe2;
    background: #f2f2fa;
    line-height: 13px;
    letter-spacing: -0.35px;
}
.scroll {
    display: flex;
    align-items: center;
    flex: 1;
    height: 14px;
    margin-left: 15px;
    padding: 0 4px 0 5px;
    border-left: 1px solid #8ca5cd;
    background: #f1f1f2;
}
.arrow {
    border: 3px solid transparent;
}
.left {
    border-right: 4px solid #24272d;
    border-left: 0;
}
.right {
    border-left: 4px solid #24272d;
    border-right: 0;
}
.track {
    flex: 1;
    padding-left: 138px;
}
.thumb {
    display: flex;
    align-items: center;
    justify-content: center;
    gap: 1px;
    width: 243px;
    height: 12px;
    border: 1px solid #8e929e;
    border-radius: 1px;
    background: linear-gradient(#f2f2f7, #d5d6e0 50%, #a7aabb);
}
.thumb i {
    width: 1px;
    height: 5px;
    background: #777c8c;
}

/* status bar */
.status-bar {
    display: flex;
    align-items: center;
    height: 19px;
    padding: 0 0 2px 13px;
    background: linear-gradient(#d5e5fb, #b9d2f6 45%, #c3dcfb 85%, #91afd7);
    letter-spacing: -0.2px;
    color: #2a4070;
}
.num-lock {
    margin-left: auto;
    letter-spacing: -0.55px;
}
.view-buttons {
    display: flex;
    gap: 2px;
    width: 61px;
    margin-left: 10px;
    padding: 1px 0 0 2px;
    border-left: 1px solid #91add9;
    background: #b2caee;
}
.view-buttons .on {
    background: #fbdc9a;
    outline: 1px solid #c09a58;
    outline-offset: -1px;
}
.grip {
    margin: 3px 7px 0 1px;
}
```
